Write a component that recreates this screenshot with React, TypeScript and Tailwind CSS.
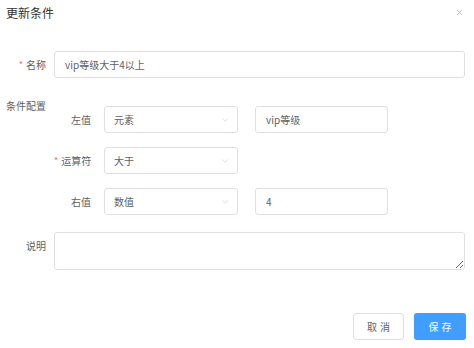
import { ChevronDown, X } from "lucide-react";

const rows = [
  { label: "左值", required: false, select: "元素", value: "vip等级" },
  { label: "运算符", required: true, select: "大于", value: null },
  { label: "右值", required: false, select: "数值", value: "4" },
];

function Star() {
  return <span className="text-[#f56c6c] text-[9px] mr-[3px] relative top-[-1px]">*</span>;
}

export default function App() {
  return (
    <div className="w-[474px] h-[348px] bg-white flex flex-col font-['Noto_Sans_CJK_SC',sans-serif] text-[10px] text-[#606266]">
      {/* Header */}
      <div className="h-[25px] flex items-center justify-between pl-[6px] pr-[10px]">
        <span className="text-[12px] text-[#303133]">更新条件</span>
        <X size={9} strokeWidth={1.5} className="text-[#909399]" />
      </div>

      {/* Name */}
      <div className="mt-[26px] flex items-center h-[27px] pr-[9px]">
        <div className="w-[54px] pr-[8px] text-right whitespace-nowrap">
          <Star />
          名称
        </div>
        <div className="flex-1 h-full border border-[#dcdfe6] rounded-[3px] flex items-center pl-[10px]">
          vip等级大于4以上
        </div>
      </div>

      {/* Conditions */}
      <div className="mt-[14px] flex">
        <div className="w-[54px] pr-[8px] text-right leading-[28px] shrink-0 whitespace-nowrap">条件配置</div>
        <div className="pt-[14px] flex flex-col gap-[14px]">
          {rows.map((r) => (
            <div key={r.label} className="flex items-center h-[27px]">
              <div className="w-[50px] pr-[13px] text-right whitespace-nowrap shrink-0">
                {r.required && <Star />}
                {r.label}
              </div>
              <div className="w-[134px] h-full border border-[#dcdfe6] rounded-[3px] flex items-center justify-between pl-[9px] pr-[7px]">
                <span>{r.select}</span>
                <ChevronDown size={10} strokeWidth={1.3} className="text-[#c0c4cc]" />
              </div>
              {r.value !== null && (
                <div className="ml-[17px] w-[133px] h-full border border-[#dcdfe6] rounded-[3px] flex items-center pl-[10px]">
                  {r.value}
                </div>
              )}
            </div>
          ))}
        </div>
      </div>

      {/* Description */}
      <div className="mt-[17px] flex pr-[9px]">
        <div className="w-[54px] pr-[8px] text-right leading-[28px]">说明</div>
        <textarea
          readOnly
          className="flex-1 h-[38px] border border-[#dcdfe6] rounded-[3px] outline-none"
        />
      </div>

      {/* Footer */}
      <div className="mt-[43px] flex justify-end gap-[10px] pr-[8px]">
        <button className="w-[51px] h-[27px] border border-[#dcdfe6] rounded-[3px] bg-white text-[#606266] text-[10px] tracking-[3px] pl-[3px]">
          取消
        </button>
        <button className="w-[52px] h-[27px] rounded-[3px] bg-[#409eff] text-white text-[10px] tracking-[3px] pl-[3px]">
          保存
        </button>
      </div>
    </div>
  );
}
